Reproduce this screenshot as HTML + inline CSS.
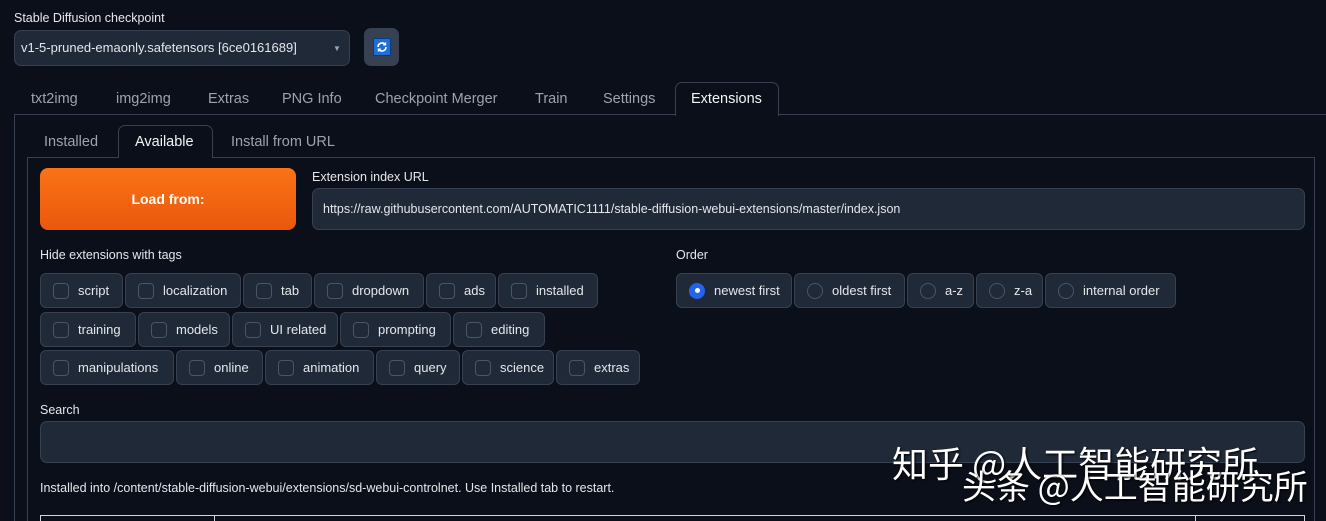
<!DOCTYPE html><html style="overflow:hidden;width:1326px;height:521px"><head><style>
*{box-sizing:border-box;margin:0;padding:0}
body{width:1326px;height:521px;background:#0b0f19;font-family:"Liberation Sans",sans-serif;color:#e5e7eb;position:relative;overflow:hidden;font-size:13px}
.a{position:absolute}
.lbl{font-size:12.5px;color:#e5e7eb}
.inp{background:#1f2937;border:1px solid #374151;border-radius:7px}
.chip{position:absolute;height:35px;background:#1f2937;border:1px solid #374151;border-radius:6px;display:flex;align-items:center;padding-left:12px;font-size:13px;color:#e5e7eb}
.chip i{display:inline-block;width:16px;height:16px;border:1px solid #4b5563;background:#1f2937;border-radius:4px;margin-right:9px}
.chip b{font-weight:normal}
.r i{border-radius:50%}
.tab{position:absolute;font-size:14.5px;color:#9ca3af}
</style></head><body>
<div class="a lbl" style="left:14px;top:11px">Stable Diffusion checkpoint</div>
<div class="a inp" style="left:14px;top:30px;width:336px;height:36px;"></div>
<div class="a" style="left:21px;top:40px;font-size:13px">v1-5-pruned-emaonly.safetensors [6ce0161689]</div>
<div class="a" style="left:333px;top:44px;font-size:8px;color:#9ca3af">▼</div>
<div class="a" style="left:364px;top:28px;width:35px;height:38px;background:#374151;border-radius:7px"></div>
<div class="a" style="left:373px;top:38px;width:18px;height:18px;background:#1e6fd9;border:1px solid #0a3a80;display:flex;align-items:center;justify-content:center"><svg width="12" height="12" viewBox="0 0 12 12"><path d="M2 6a4 4 0 0 1 7-2.6M10 6a4 4 0 0 1-7 2.6" stroke="#fff" stroke-width="1.6" fill="none"/><path d="M9.5 1.5v2.3H7.2M2.5 10.5V8.2h2.3" stroke="#fff" stroke-width="1.4" fill="none"/></svg></div>

<div class="tab" style="left:31px;top:91px">txt2img</div>
<div class="tab" style="left:116px;top:91px">img2img</div>
<div class="tab" style="left:208px;top:91px">Extras</div>
<div class="tab" style="left:282px;top:91px">PNG Info</div>
<div class="tab" style="left:375px;top:91px">Checkpoint Merger</div>
<div class="tab" style="left:535px;top:91px">Train</div>
<div class="tab" style="left:603px;top:91px">Settings</div>
<div class="a" style="left:14px;top:114px;width:1340px;height:420px;border:1px solid #374151"></div>
<div class="a" style="left:675px;top:82px;width:104px;height:34px;border:1px solid #374151;border-bottom:none;border-radius:7px 7px 0 0;background:#0b0f19"></div>
<div class="tab" style="left:691px;top:91px;color:#f3f4f6">Extensions</div>

<div class="a" style="left:27px;top:157px;width:1288px;height:380px;border:1px solid #374151"></div>
<div class="tab" style="left:44px;top:134px">Installed</div>
<div class="a" style="left:118px;top:125px;width:95px;height:33px;border:1px solid #374151;border-bottom:none;border-radius:7px 7px 0 0;background:#0b0f19"></div>
<div class="tab" style="left:135px;top:134px;color:#f3f4f6">Available</div>
<div class="tab" style="left:231px;top:134px">Install from URL</div>

<div class="a" style="left:40px;top:168px;width:256px;height:62px;border-radius:8px;background:linear-gradient(180deg,#f97316,#ea580c);display:flex;align-items:center;justify-content:center;font-weight:bold;font-size:14px;color:#fff">Load from:</div>
<div class="a lbl" style="left:312px;top:170px">Extension index URL</div>
<div class="a inp" style="left:312px;top:188px;width:993px;height:42px"></div>
<div class="a" style="left:323px;top:202px;font-size:12.5px">https://raw.githubusercontent.com/AUTOMATIC1111/stable-diffusion-webui-extensions/master/index.json</div>

<div class="a lbl" style="left:40px;top:248px">Hide extensions with tags</div>
<div class="a lbl" style="left:676px;top:248px">Order</div>

<div class="chip" style="left:40px;top:273px;width:83px"><i></i><b>script</b></div>
<div class="chip" style="left:125px;top:273px;width:116px"><i></i><b>localization</b></div>
<div class="chip" style="left:243px;top:273px;width:69px"><i></i><b>tab</b></div>
<div class="chip" style="left:314px;top:273px;width:110px"><i></i><b>dropdown</b></div>
<div class="chip" style="left:426px;top:273px;width:70px"><i></i><b>ads</b></div>
<div class="chip" style="left:498px;top:273px;width:100px"><i></i><b>installed</b></div>

<div class="chip" style="left:40px;top:312px;width:96px"><i></i><b>training</b></div>
<div class="chip" style="left:138px;top:312px;width:92px"><i></i><b>models</b></div>
<div class="chip" style="left:232px;top:312px;width:106px"><i></i><b>UI related</b></div>
<div class="chip" style="left:340px;top:312px;width:111px"><i></i><b>prompting</b></div>
<div class="chip" style="left:453px;top:312px;width:92px"><i></i><b>editing</b></div>

<div class="chip" style="left:40px;top:350px;width:134px"><i></i><b>manipulations</b></div>
<div class="chip" style="left:176px;top:350px;width:87px"><i></i><b>online</b></div>
<div class="chip" style="left:265px;top:350px;width:109px"><i></i><b>animation</b></div>
<div class="chip" style="left:376px;top:350px;width:84px"><i></i><b>query</b></div>
<div class="chip" style="left:462px;top:350px;width:92px"><i></i><b>science</b></div>
<div class="chip" style="left:556px;top:350px;width:84px"><i></i><b>extras</b></div>

<div class="chip r" style="left:676px;top:273px;width:116px"><i style="background:#2563eb;border-color:#2563eb;position:relative"><span style="position:absolute;left:4.5px;top:4.5px;width:5px;height:5px;background:#fff;border-radius:50%"></span></i><b>newest first</b></div>
<div class="chip r" style="left:794px;top:273px;width:111px"><i></i><b>oldest first</b></div>
<div class="chip r" style="left:907px;top:273px;width:67px"><i></i><b>a-z</b></div>
<div class="chip r" style="left:976px;top:273px;width:67px"><i></i><b>z-a</b></div>
<div class="chip r" style="left:1045px;top:273px;width:131px"><i></i><b>internal order</b></div>

<div class="a lbl" style="left:40px;top:403px">Search</div>
<div class="a inp" style="left:40px;top:421px;width:1265px;height:42px"></div>
<div class="a lbl" style="left:40px;top:481px">Installed into /content/stable-diffusion-webui/extensions/sd-webui-controlnet. Use Installed tab to restart.</div>
<div class="a" style="left:40px;top:515px;width:1265px;height:20px;border:1px solid #d1d5db"></div>
<div class="a" style="left:214px;top:515px;width:1px;height:10px;background:#d1d5db"></div>
<div class="a" style="left:1195px;top:515px;width:1px;height:10px;background:#d1d5db"></div>

<div class="a" style="left:892px;top:444px;font-size:36px;color:#fff;font-family:'Noto Sans CJK SC',sans-serif;line-height:1;text-shadow:1px 1px 2px #000">知乎 @人工智能研究所</div>
<div class="a" style="left:962px;top:468px;font-size:34px;color:#fff;font-family:'Noto Sans CJK SC',sans-serif;line-height:1;text-shadow:1px 1px 2px #000">头条 @人工智能研究所</div>
</body></html>
